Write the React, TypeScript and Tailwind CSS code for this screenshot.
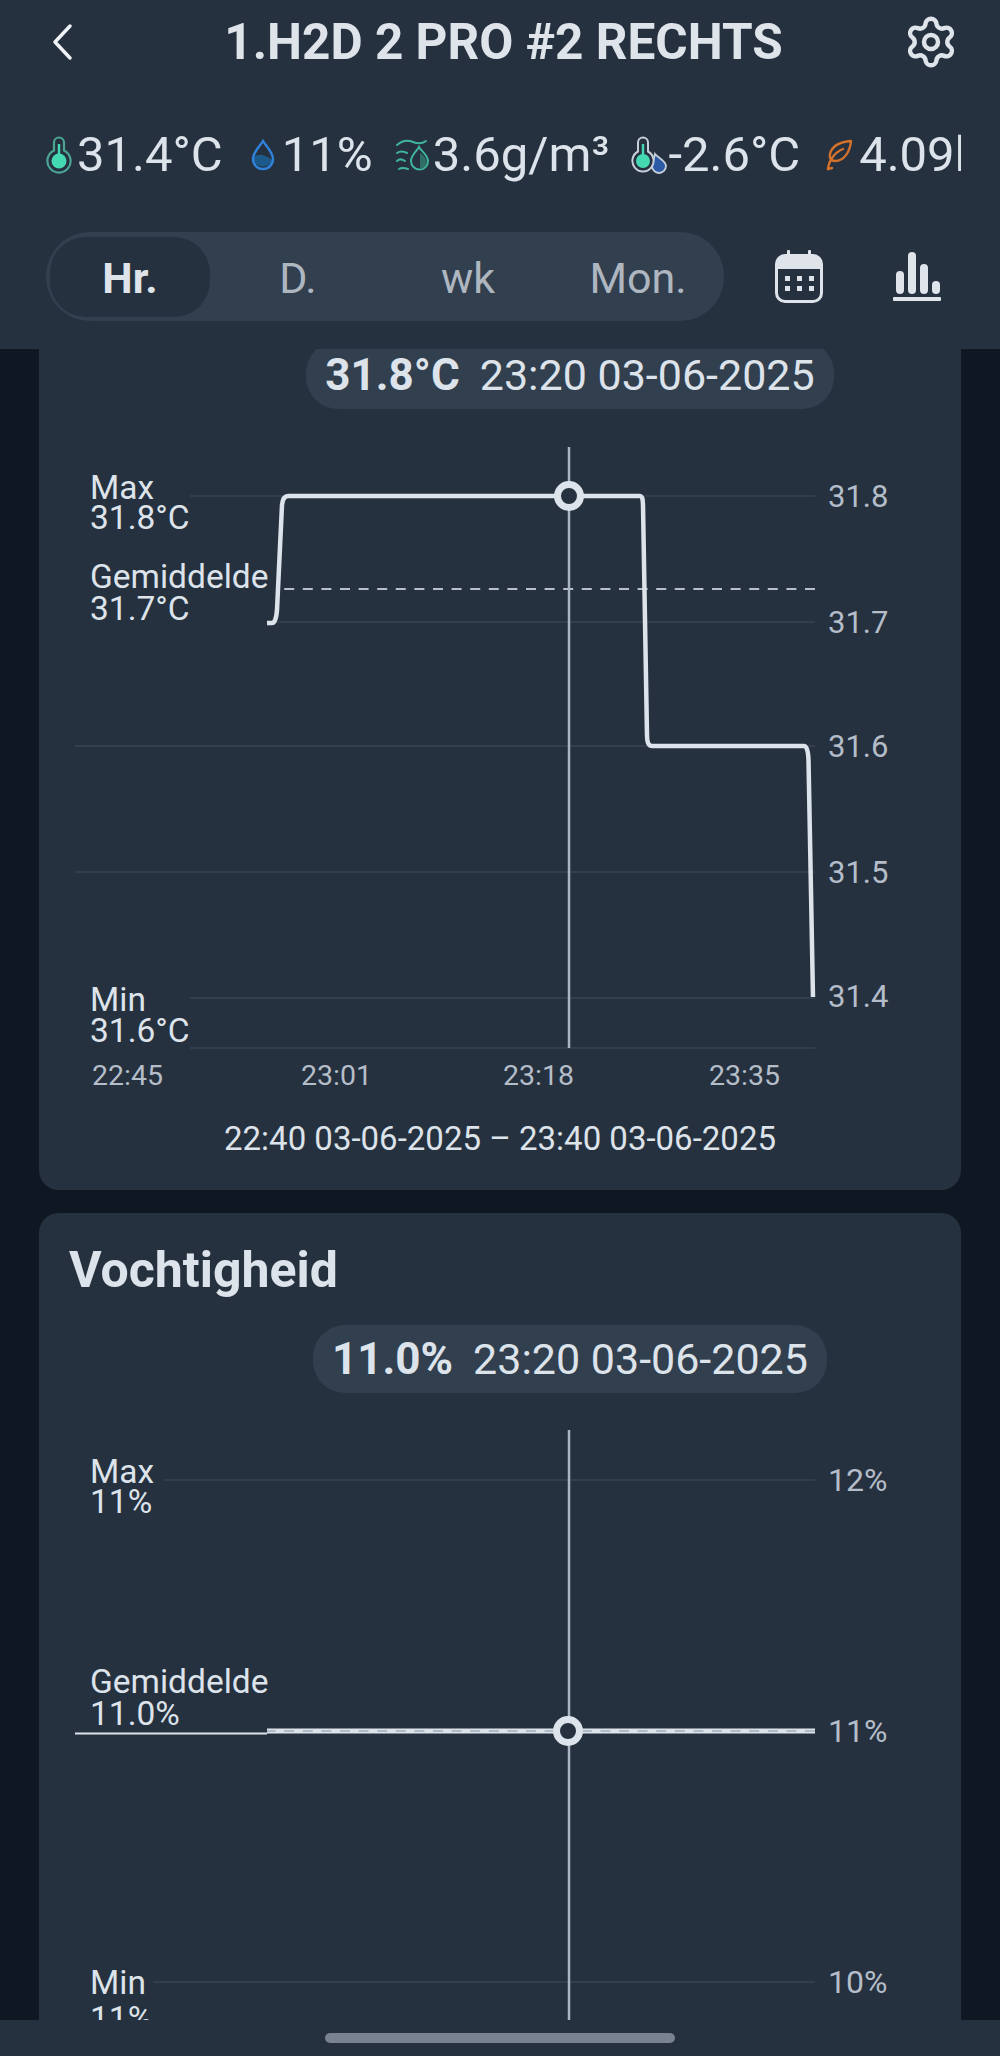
import { Settings } from "lucide-react";

const BackIcon = () => (
  <svg width="20" height="36" viewBox="0 0 20 36" fill="none" stroke="#f1f4f7" strokeWidth="3.4" strokeLinecap="round" strokeLinejoin="round">
    <path d="M18 2 L3 18 L18 34" />
  </svg>
);

const ThermoIcon = () => (
  <svg width="26" height="38" viewBox="0 0 26 38" fill="none" className="shrink-0">
    <path d="M8 14.5 V6.5 a5 5 0 0 1 10 0 V14.5 a11.6 11.6 0 1 1 -10 0 Z" stroke="#4aa593" strokeWidth="2.2" />
    <circle cx="13" cy="25" r="7.5" fill="#45d9b1" />
    <rect x="11.8" y="8" width="2.4" height="12" fill="#45d9b1" />
  </svg>
);

const DropIcon = () => (
  <svg width="24" height="32" viewBox="0 0 24 32" fill="none" className="shrink-0">
    <path d="M3 18 C8 14 14 16 21.5 21 A10 10 0 0 1 2.5 20 Z" fill="#1d5a8c" />
    <path d="M12 2 C9 7 2 13 2 20 a10 10 0 0 0 20 0 C22 13 15 7 12 2 Z" stroke="#2f83dc" strokeWidth="2.4" />
  </svg>
);

const AbsHumidityIcon = () => (
  <svg width="36" height="34" viewBox="0 0 36 34" fill="none" className="shrink-0">
    <g stroke="#3fb59c" strokeWidth="2" strokeLinecap="round">
      <path d="M2 7 C8 2 13 2 18 4 C23 6 27 6 31 3" />
      <path d="M2 15 C5 13 8 13 12 15" />
      <path d="M2 23 C4 21 7 21 10 23" />
      <path d="M4 31 C7 29 10 30 13 31" />
    </g>
    <path d="M24 9 C22 13 16 17 16 23 a8.5 8.5 0 0 0 17 0 C33 17 26 13 24 9 Z" stroke="#3fb59c" strokeWidth="2" />
    <path d="M25 15 C28 17 32 20 31.5 25 C31 29 27 31 25 31 Z" fill="#2f6f68" />
  </svg>
);

const DewPointIcon = () => (
  <svg width="37" height="38" viewBox="0 0 37 38" fill="none" className="shrink-0">
    <path d="M24 18 C26 21 35 25 35 30 a7 7 0 0 1 -14 0 Z" fill="#2d5aa6" stroke="#c6ced7" strokeWidth="1.8" />
    <path d="M7 15.5 V6.5 a5 5 0 0 1 10 0 V15.5 a10.6 10.6 0 1 1 -10 0 Z" fill="#26313f" stroke="#c6ced7" strokeWidth="2" />
    <circle cx="12" cy="25" r="7" fill="#45d9b1" />
    <rect x="10.8" y="8" width="2.4" height="12" fill="#45d9b1" />
  </svg>
);

const LeafIcon = () => (
  <svg width="27" height="32" viewBox="0 0 27 32" fill="none" stroke="#d4722c" strokeWidth="2.4" strokeLinecap="round" strokeLinejoin="round" className="shrink-0">
    <path d="M25 2 C14 3 6 6 4 15 C3 19 5 22 9 22 C18 22 24 13 25 2 Z" />
    <path d="M17 10 C9 13 3 21 2 30" />
    <path d="M2 30 L6 29" />
  </svg>
);

const CalendarIcon = () => (
  <svg width="50" height="54" viewBox="0 0 50 54" fill="none">
    <rect x="13" y="0" width="3" height="7" rx="1" fill="#dfe4ea" />
    <rect x="34" y="0" width="3" height="7" rx="1" fill="#dfe4ea" />
    <path d="M11 4 H39 a10 10 0 0 1 10 10 V19 H1 V14 a10 10 0 0 1 10 -10 Z" fill="#dfe4ea" />
    <path d="M2.5 18 V43 a8.5 8.5 0 0 0 8.5 8.5 H39 a8.5 8.5 0 0 0 8.5 -8.5 V18" stroke="#dfe4ea" strokeWidth="3" />
    <g fill="#dfe4ea">
      <rect x="11" y="26" width="5" height="5" />
      <rect x="23" y="26" width="5" height="5" />
      <rect x="35" y="26" width="5" height="5" />
      <rect x="11" y="36" width="5" height="5" />
      <rect x="23" y="36" width="5" height="5" />
      <rect x="35" y="36" width="5" height="5" />
    </g>
  </svg>
);

const BarsIcon = () => (
  <svg width="48" height="50" viewBox="0 0 48 50">
    <g fill="#dfe4ea">
      <rect x="3" y="19" width="8" height="23" rx="4" />
      <rect x="15" y="0" width="8" height="42" rx="4" />
      <rect x="27" y="12" width="8" height="30" rx="4" />
      <rect x="39" y="29" width="8" height="13" rx="4" />
      <rect x="0" y="45" width="48" height="4" rx="1" />
    </g>
  </svg>
);

function Pill({ value, time }: { value: string; time: string }) {
  return (
    <div className="flex justify-center pl-[140px]">
      <div className="flex h-[68px] items-center gap-[20px] rounded-[32px] bg-[#323f4f] px-[19px] text-[43px] text-[#dde3ea]">
        <span className="text-[44px] font-bold">{value}</span>
        <span>{time}</span>
      </div>
    </div>
  );
}

const labelCls = "fill-[#dde3ea] text-[33.5px]";
const axisCls = "fill-[#b4bdc8] text-[31px]";
const percentCls = "fill-[#b4bdc8] text-[32px]";
const timeCls = "fill-[#b4bdc8] text-[28.5px]";

function TemperatureChart() {
  return (
    <svg viewBox="39 430 922 680" className="mt-[21px] block h-[680px] w-[922px]" fill="none">
      <g stroke="#333e4d" strokeWidth="2">
        <path d="M190 496 H815" />
        <path d="M277 622 H815" />
        <path d="M75 746 H815" />
        <path d="M75 872 H815" />
        <path d="M190 998 H815" />
        <path d="M190 1048 H815" />
      </g>
      <path d="M815 589 H278" stroke="#b7c1cc" strokeWidth="2" strokeDasharray="10 8.6" />
      <path d="M569 447 V1048" stroke="#a9b5c2" strokeWidth="2.5" />
      <path
        d="M267 623 H272 Q276 623 277 610 L282 505 Q283 496 288 496 H640 Q643 496 643 505 L647 735 Q647 746 652 746 H804 Q808 746 808.5 760 L813 997"
        stroke="#dde3ea"
        strokeWidth="4.5"
      />
      <circle cx="569" cy="496" r="11.5" fill="#26313f" stroke="#dde3ea" strokeWidth="7" />

      <text x="90" y="499" className={labelCls}>Max</text>
      <text x="90" y="529" className={labelCls}>31.8°C</text>
      <text x="90" y="588" className={labelCls}>Gemiddelde</text>
      <text x="90" y="620" className={labelCls}>31.7°C</text>
      <text x="90" y="1011" className={labelCls}>Min</text>
      <text x="90" y="1042" className={labelCls}>31.6°C</text>

      <text x="828" y="507" className={axisCls}>31.8</text>
      <text x="828" y="633" className={axisCls}>31.7</text>
      <text x="828" y="757" className={axisCls}>31.6</text>
      <text x="828" y="883" className={axisCls}>31.5</text>
      <text x="828" y="1007" className={axisCls}>31.4</text>

      <text x="92" y="1085" className={timeCls}>22:45</text>
      <text x="301" y="1085" className={timeCls}>23:01</text>
      <text x="503" y="1085" className={timeCls}>23:18</text>
      <text x="709" y="1085" className={timeCls}>23:35</text>
    </svg>
  );
}

function HumidityChart() {
  return (
    <svg viewBox="39 1420 922 610" className="mt-[27px] block h-[610px] w-[922px]" fill="none">
      <g stroke="#333e4d" strokeWidth="2">
        <path d="M164 1480 H815" />
        <path d="M153 1982 H815" />
      </g>
      <path d="M75 1733.5 H267" stroke="#dde3ea" strokeWidth="2" />
      <path d="M267 1731 H815" stroke="#dde3ea" strokeWidth="5" />
      <path d="M815 1731 H267" stroke="#aebbc7" strokeWidth="2" strokeDasharray="10 8.6" />
      <path d="M569 1430 V2030" stroke="#a9b5c2" strokeWidth="2.5" />
      <circle cx="568" cy="1731" r="11.5" fill="#26313f" stroke="#dde3ea" strokeWidth="7" />

      <text x="90" y="1483" className={labelCls}>Max</text>
      <text x="90" y="1513" className={labelCls}>11%</text>
      <text x="90" y="1693" className={labelCls}>Gemiddelde</text>
      <text x="90" y="1725" className={labelCls}>11.0%</text>
      <text x="90" y="1994" className={labelCls}>Min</text>
      <text x="90" y="2030" className={labelCls}>11%</text>

      <text x="828" y="1491" className={percentCls}>12%</text>
      <text x="828" y="1742" className={percentCls}>11%</text>
      <text x="828" y="1993" className={percentCls}>10%</text>
    </svg>
  );
}

export default function App() {
  return (
    <div className="flex h-[2056px] w-[1000px] flex-col overflow-hidden bg-[#0f1822] font-['Roboto',sans-serif]">
      <header className="relative z-10 h-[349px] shrink-0 bg-[#26313f]">
        <div className="flex h-[84px] items-center pl-[52px] pr-[45px]">
          <div className="w-[48px]">
            <BackIcon />
          </div>
          <h1 className="flex-1 text-center text-[49.5px] font-bold text-[#dfe4ea]">1.H2D 2 PRO #2 RECHTS</h1>
          <Settings size={56} strokeWidth={1.9} className="-mx-[4px] text-[#dfe4ea]" />
        </div>

        <div className="mt-[40px] flex h-[62px] w-[961px] items-center overflow-hidden whitespace-nowrap pl-[46px] text-[49px] text-[#dde3ea]">
          <ThermoIcon />
          <span className="ml-[5px]">31.4°C</span>
          <span className="ml-[28px]"><DropIcon /></span>
          <span className="ml-[7px]">11%</span>
          <span className="ml-[22px]"><AbsHumidityIcon /></span>
          <span className="ml-[2px]">3.6g/m³</span>
          <span className="ml-[22px]"><DewPointIcon /></span>
          <span>-2.6°C</span>
          <span className="ml-[26px]"><LeafIcon /></span>
          <span className="ml-[6px]">4.09kPa</span>
        </div>

        <div className="mt-[46px] flex items-center">
          <div className="ml-[46px] flex h-[89px] w-[678px] items-center rounded-[44px] bg-[#323f4f] px-[4px] pl-[4px] text-[43px] text-[#aeb6c0]">
            <div className="flex h-[80px] w-[160px] items-center justify-center rounded-[36px] bg-[#26313f] pt-[4px] font-bold text-[#dfe4ea]">Hr.</div>
            <div className="flex-1 pl-[6px] pt-[4px] text-center">D.</div>
            <div className="flex-1 pl-[6px] pt-[4px] text-center">wk</div>
            <div className="flex-1 pl-[6px] pt-[4px] text-center">Mon.</div>
          </div>
          <div className="ml-[50px]"><CalendarIcon /></div>
          <div className="ml-[69px]"><BarsIcon /></div>
        </div>
      </header>

      <main className="min-h-0 flex-1 overflow-hidden px-[39px]">
        <section className="flex h-[841px] flex-col rounded-b-[20px] bg-[#26313f]">
          <div className="-mt-[8px]">
            <Pill value="31.8°C" time="23:20 03-06-2025" />
          </div>
          <TemperatureChart />
          <p className="mt-[9px] text-center text-[33px] leading-[40px] text-[#dde3ea]">22:40 03-06-2025 – 23:40 03-06-2025</p>
        </section>

        <section className="mt-[23px] rounded-t-[20px] bg-[#26313f] pt-[30px]">
          <h2 className="pl-[30px] text-[50px] font-bold leading-[54px] text-[#dde3ea]">Vochtigheid</h2>
          <div className="mt-[28px]">
            <Pill value="11.0%" time="23:20 03-06-2025" />
          </div>
          <HumidityChart />
        </section>
      </main>

      <footer className="relative z-10 flex h-[36px] shrink-0 items-center justify-center bg-[#26313f]">
        <div className="h-[10px] w-[350px] rounded-[5px] bg-[#79838f]" />
      </footer>
    </div>
  );
}
